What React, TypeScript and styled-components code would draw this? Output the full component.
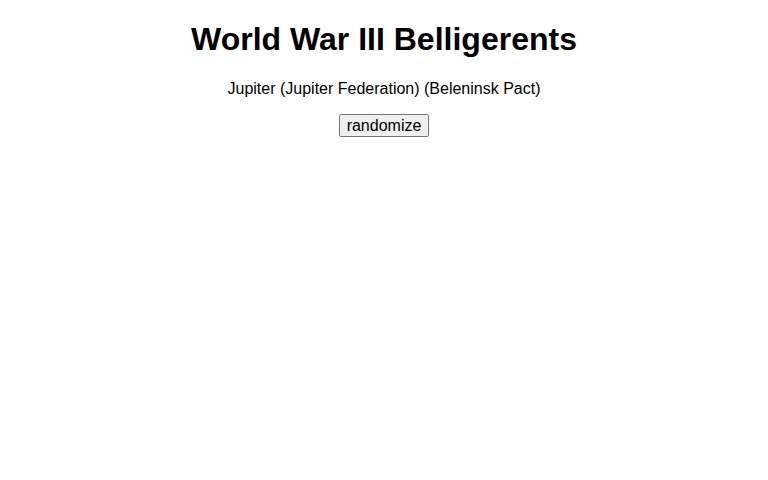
import React, { useState } from 'react';
import styled, { createGlobalStyle } from 'styled-components';

const GlobalStyle = createGlobalStyle`
    body {
        margin: 0;
        background: #fff;
        color: #000;
        font-family: "Liberation Sans", Arial, sans-serif;
    }
`;

const belligerents = [
    'Jupiter (Jupiter Federation) (Beleninsk Pact)',
    'Mars (Martian Republic) (Olympus Accord)',
    'Luna (Lunar Directorate) (Beleninsk Pact)',
    'Ceres (Belt Union) (Olympus Accord)',
];

const App: React.FC = () => {
    const [index, setIndex] = useState(0);

    const randomize = () => {
        setIndex(Math.floor(Math.random() * belligerents.length));
    };

    return (
        <Page>
            <GlobalStyle />
            <Title>World War III Belligerents</Title>
            <Entry>{belligerents[index]}</Entry>
            <RandomButton onClick={randomize}>randomize</RandomButton>
        </Page>
    );
};

export default App;

const Page = styled.div`
    text-align: center;
`;

const Title = styled.h1`
    font-size: 32px;
    font-weight: bold;
    margin: 21.44px 0;
`;

const Entry = styled.p`
    font-size: 16px;
    margin: 16px 0;
`;

const RandomButton = styled.button`
    font-family: "Liberation Sans", Arial, sans-serif;
    font-size: 16px;
    color: #000;
    background: #efefef;
    border: 1px solid #767676;
    border-radius: 2px;
    padding: 2px 7px 1px;
    cursor: pointer;

    &:hover {
        background: #e5e5e5;
    }
`;
